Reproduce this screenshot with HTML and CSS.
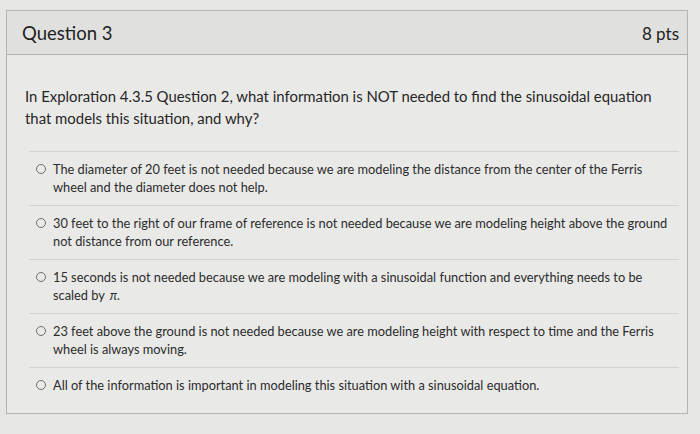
FILE: index.html
```html
<!DOCTYPE html>
<html>
<head>
<meta charset="utf-8">
<link rel="stylesheet" href="styles.css">
</head>
<body>
<div class="card">
  <div class="header">
    <span class="title">Question 3</span>
    <span class="pts">8 pts</span>
  </div>
  <div class="body">
    <p class="question">In Exploration 4.3.5 Question 2, what information is NOT needed to find the sinusoidal equation that models this situation, and why?</p>
    <div class="answers">
      <div class="answer"><span class="radio"></span><span class="text">The diameter of 20 feet is not needed because we are modeling the distance from the center of the Ferris wheel and the diameter does not help.</span></div>
      <div class="answer"><span class="radio"></span><span class="text">30 feet to the right of our frame of reference is not needed because we are modeling height above the ground not distance from our reference.</span></div>
      <div class="answer"><span class="radio"></span><span class="text">15 seconds is not needed because we are modeling with a sinusoidal function and everything needs to be scaled by<em class="pi">π.</em></span></div>
      <div class="answer"><span class="radio"></span><span class="text">23 feet above the ground is not needed because we are modeling height with respect to time and the Ferris wheel is always moving.</span></div>
      <div class="answer"><span class="radio"></span><span class="text">All of the information is important in modeling this situation with a sinusoidal equation.</span></div>
    </div>
  </div>
</div>
</body>
</html>
```
FILE: styles.css
```css
html, body {
  margin: 0;
  padding: 0;
  height: 100%;
}
body {
  background: #e6e6e4;
  font-family: Lato, "Open Sans", sans-serif;
  color: #2e2e2e;
  padding: 10px 0 0 6px;
  box-sizing: border-box;
}
.card {
  width: 682px;
  height: 404px;
  box-sizing: border-box;
  border: 1px solid #b4b4b2;
  background: #e9e9e7;
}
.header {
  height: 44px;
  box-sizing: border-box;
  background: #e0e0de;
  border-bottom: 1px solid #b0b0ae;
  display: flex;
  justify-content: space-between;
  align-items: center;
  padding: 0 8px 0 15px;
}
.title {
  font-size: 18.5px;
  color: #222;
}
.pts {
  font-size: 17px;
  color: #222;
  padding-top: 2px;
}
.body {
  padding: 30px 8px 0 18px;
}
.question {
  margin: 0;
  font-size: 14.9px;
  line-height: 22px;
  color: #262626;
}
.answers {
  margin-top: 22px;
  margin-left: 4px;
}
.answer {
  display: flex;
  align-items: flex-start;
  border-top: 1px solid #d2d2d0;
  padding: 8px 0 9px 7px;
  min-height: 36px;
}
.answer:last-child {
  min-height: 18px;
}
.radio {
  flex: none;
  width: 10px;
  height: 10px;
  border: 1.5px solid #707070;
  border-radius: 50%;
  margin-top: 4px;
  margin-right: 7px;
  box-sizing: border-box;
}
.text {
  font-size: 12.8px;
  line-height: 18px;
  color: #2c2c2c;
  padding-right: 10px;
}
.pi {
  font-style: italic;
  margin-left: 5px;
}
```
